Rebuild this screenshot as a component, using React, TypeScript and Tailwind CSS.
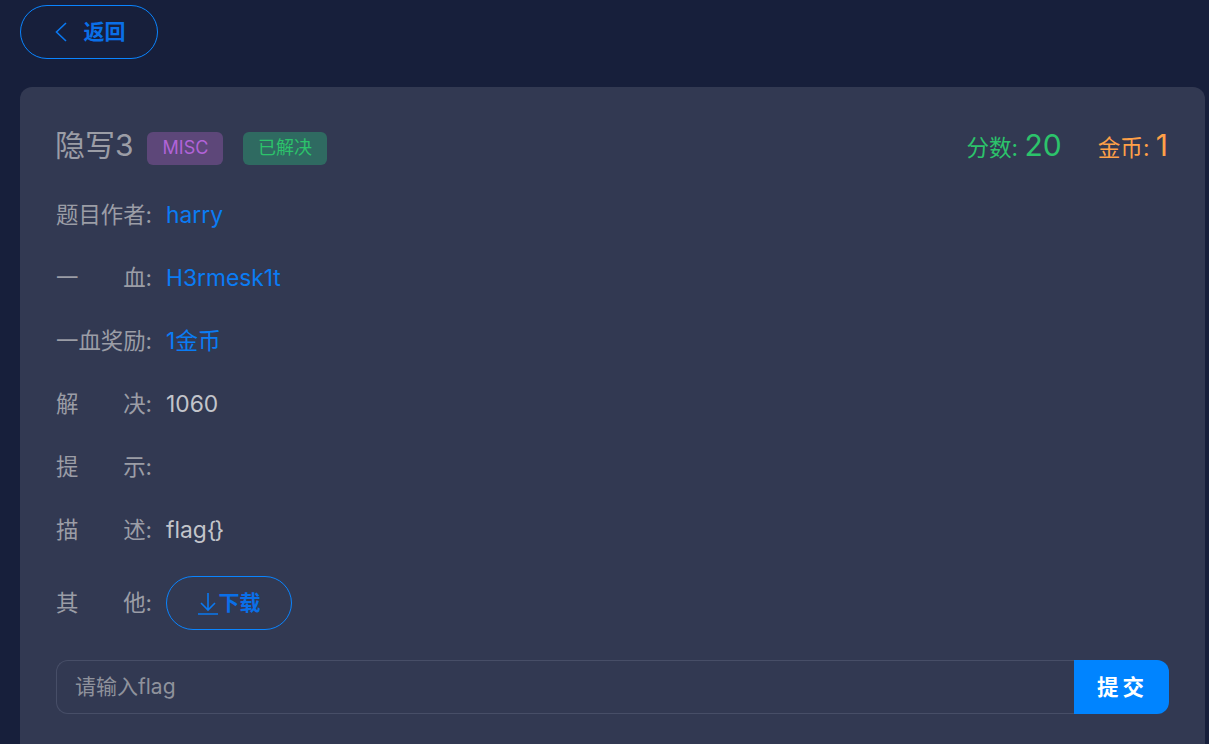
import React from "react";

const font = "font-['Inter','Noto_Sans_CJK_SC',sans-serif]";

function Row({ label, children, extra = "" }: { label: string[]; children?: React.ReactNode; extra?: string }) {
  return (
    <div className={`flex items-center h-[54px] mb-[9px] text-[22.8px] leading-[30px] ${extra}`}>
      <div className="w-[96px] flex justify-between text-[22.4px] text-[#9b9da6] shrink-0 whitespace-nowrap">
        {label.map((l, i) => (
          <span key={i}>{l}</span>
        ))}
      </div>
      <div className="ml-[14px] text-[#c3c5cb]">{children}</div>
    </div>
  );
}

export default function App() {
  return (
    <div className={`${font} w-[1209px] h-[744px] overflow-hidden bg-[#171f3b] pl-5 pr-1 pt-[5px]`}>
      <button className="w-[138px] h-[54px] rounded-[27px] border border-[#0a84ff] flex items-center justify-center gap-[16px] pl-[1px] text-[#0a6fe8] text-[21px] font-bold">
        <svg width="14" height="20" viewBox="0 0 14 20" fill="none" stroke="#0a78f0" strokeWidth="1.6">
          <path d="M12 1 L2.5 10 L12 19" />
        </svg>
        <span>返回</span>
      </button>
      <div className="mt-[28px] h-[680px] rounded-xl bg-[#323952] pl-9 pr-9 pt-[36px]">
        <div className="flex items-center justify-between h-[44px] mb-[21px]">
          <div className="flex items-center">
            <span className="w-[79px] -ml-[1px] mr-[1px] text-[30px] leading-[40px] text-[#9b9da6]">隐写3</span>
            <span className="ml-[12px] mt-[6px] w-[76px] h-[33px] pl-[1px] rounded-md bg-[#5d4779] text-[#b163d8] text-lg flex items-center justify-center">MISC</span>
            <span className="ml-[20px] mt-[6px] w-[84px] h-[33px] rounded-md bg-[#2f6a61] text-[#2cc36b] text-lg flex items-center justify-center">已解决</span>
          </div>
          <div className="flex items-center mr-[1px]">
            <span className="text-[#2cc36b] text-[22.6px]">分数: <span className="text-[30px]">20</span></span>
            <span className="ml-[36px] text-[#ffa048] text-[22.6px]">金币: <span className="text-[30px]">1</span></span>
          </div>
        </div>
        <Row label={["题目作者:"]}><span className="text-[#0a7cf5]">harry</span></Row>
        <Row label={["一", "血:"]}><span className="text-[#0a7cf5]">H3rmesk1t</span></Row>
        <Row label={["一血奖励:"]}><span className="text-[#0a7cf5]">1金币</span></Row>
        <Row label={["解", "决:"]}>1060</Row>
        <Row label={["提", "示:"]} />
        <Row label={["描", "述:"]}>flag<span className="tracking-[-2px]">{"{}"}</span></Row>
        <Row label={["其", "他:"]} extra="mt-[19px]">
          <button className="w-[126px] h-[54px] rounded-[27px] border border-[#0a84ff] flex items-center justify-center text-[#0a6fe8] text-[21px] font-bold">
            <svg width="22" height="24" viewBox="0 0 22 24" fill="none" stroke="#0a78f0" strokeWidth="1.6" className="-ml-[1px]">
              <path d="M11 2 V18 M4 12 L11 19 L18 12 M1 23 H21" />
            </svg>
            <span>下载</span>
          </button>
        </Row>
        <div className="flex h-[54px] mt-[30px]">
          <input
            readOnly
            placeholder="请输入flag"
            className="flex-1 min-w-0 bg-transparent border border-[#474e67] border-r-0 rounded-l-xl pl-[18px] text-[21px] outline-none placeholder:text-[#8f929c]"
          />
          <button className="w-[95px] pl-[2px] rounded-r-xl bg-[#0084ff] text-white text-[21.5px] font-bold tracking-[4px]">提交</button>
        </div>
      </div>
    </div>
  );
}
